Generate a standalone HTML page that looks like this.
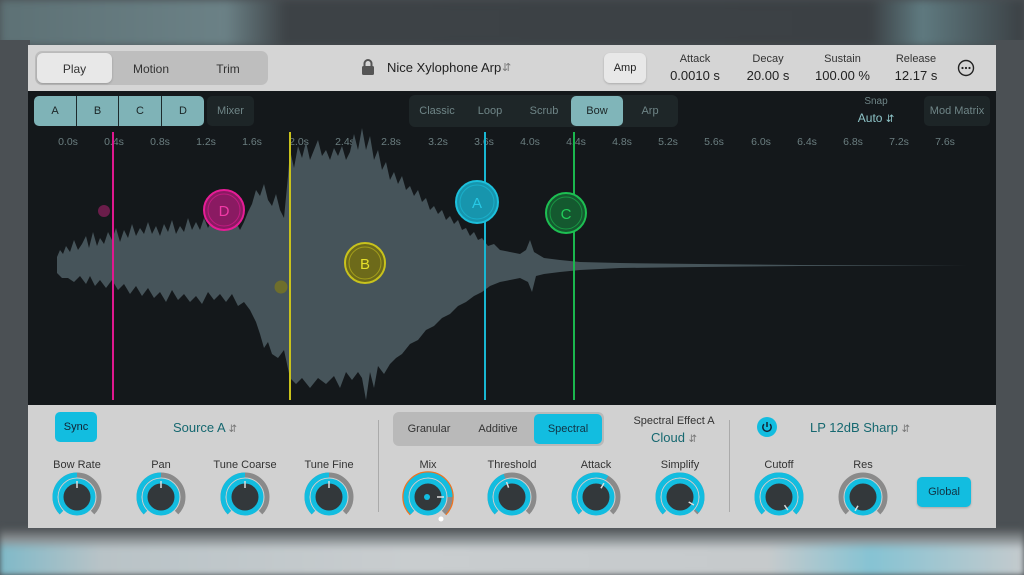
<!DOCTYPE html>
<html><head><meta charset="utf-8"><style>
*{margin:0;padding:0;box-sizing:border-box}
body{width:1024px;height:575px;overflow:hidden;position:relative;font-family:"Liberation Sans",sans-serif;background:#4a4f53}
.a{position:absolute}
.t{position:absolute;white-space:nowrap;text-align:center}
</style></head><body>
<div class="a" style="left:0;top:0;width:1024px;height:46px;background:linear-gradient(90deg,#5d7175 0,#6b8186 22%,#3d4246 28%,#3b4044 85%,#5f7a80 90%,#3b4044 100%);filter:blur(4px)"></div>
<div class="a" style="left:0;top:40px;width:30px;height:495px;background:#4b5054"></div>
<div class="a" style="left:994px;top:40px;width:30px;height:495px;background:#4b5054"></div>
<div class="a" style="left:0;top:528px;width:1024px;height:47px;background:linear-gradient(180deg,#4e5356 0,#8d9396 25%,rgba(0,0,0,0) 45%),linear-gradient(90deg,#7fb9c8 0,#b9c3c7 10%,#c9cdcf 40%,#c6cacc 75%,#86c3d3 85%,#c4cacd 100%);filter:blur(3px)"></div>

<div class="a" style="left:28px;top:45px;width:968px;height:46px;background:#d5d5d5"></div>
<div class="a" style="left:35px;top:51px;width:233px;height:34px;background:#bebebe;border-radius:7px"></div>
<div class="a" style="left:37px;top:53px;width:75px;height:30px;background:#e8e8e8;border-radius:6px;box-shadow:0 1px 2px rgba(0,0,0,.2)"></div>
<div class="t" style="left:37px;top:62px;width:75px;font-size:12px;color:#333">Play</div>
<div class="t" style="left:113px;top:62px;width:76px;font-size:12px;color:#333">Motion</div>
<div class="t" style="left:190px;top:62px;width:76px;font-size:12px;color:#333">Trim</div>
<svg class="a" style="left:361px;top:58px" width="14" height="18"><path d="M3.5 8V5.5a3.5 3.5 0 0 1 7 0V8" fill="none" stroke="#555" stroke-width="2"/><rect x="1" y="8" width="12" height="9" rx="1.5" fill="#555"/></svg>
<div class="t" style="left:387px;top:60px;font-size:13px;color:#222">Nice Xylophone Arp</div>
<div class="t" style="left:502px;top:61px;font-size:11px;color:#777">&#8693;</div>
<div class="a" style="left:604px;top:53px;width:42px;height:30px;background:#e8e8e8;border-radius:6px;box-shadow:0 1px 2px rgba(0,0,0,.2)"></div>
<div class="t" style="left:604px;top:62px;width:42px;font-size:11px;color:#222">Amp</div>
<div class="t" style="left:660px;top:53px;width:70px;font-size:11px;color:#333">Attack</div>
<div class="t" style="left:660px;top:68px;width:70px;font-size:13px;color:#222">0.0010 s</div>
<div class="t" style="left:733px;top:53px;width:70px;font-size:11px;color:#333">Decay</div>
<div class="t" style="left:733px;top:68px;width:70px;font-size:13px;color:#222">20.00 s</div>
<div class="t" style="left:805px;top:53px;width:75px;font-size:11px;color:#333">Sustain</div>
<div class="t" style="left:805px;top:68px;width:75px;font-size:13px;color:#222">100.00 %</div>
<div class="t" style="left:881px;top:53px;width:70px;font-size:11px;color:#333">Release</div>
<div class="t" style="left:881px;top:68px;width:70px;font-size:13px;color:#222">12.17 s</div>
<svg class="a" style="left:957px;top:59px" width="18" height="18"><circle cx="9" cy="9" r="7.5" fill="none" stroke="#222" stroke-width="1.4"/><circle cx="5.5" cy="9" r="1.1" fill="#222"/><circle cx="9" cy="9" r="1.1" fill="#222"/><circle cx="12.5" cy="9" r="1.1" fill="#222"/></svg>

<div class="a" style="left:28px;top:91px;width:968px;height:314px;background:#14181b"></div>
<div class="a" style="left:34px;top:96px;width:170px;height:30px;background:#7fb3b7;border-radius:5px"></div>
<div class="a" style="left:76px;top:96px;width:1px;height:30px;background:#1d2a2c"></div>
<div class="a" style="left:118px;top:96px;width:1px;height:30px;background:#1d2a2c"></div>
<div class="a" style="left:161px;top:96px;width:1px;height:30px;background:#1d2a2c"></div>
<div class="t" style="left:34px;top:105px;width:42px;font-size:11px;color:#1b2526">A</div>
<div class="t" style="left:77px;top:105px;width:41px;font-size:11px;color:#1b2526">B</div>
<div class="t" style="left:119px;top:105px;width:42px;font-size:11px;color:#1b2526">C</div>
<div class="t" style="left:162px;top:105px;width:42px;font-size:11px;color:#1b2526">D</div>
<div class="a" style="left:207px;top:96px;width:47px;height:30px;background:#1d2527;border-radius:5px"></div>
<div class="t" style="left:207px;top:105px;width:47px;font-size:11px;color:#6f8587">Mixer</div>
<div class="a" style="left:409px;top:95px;width:269px;height:32px;background:#1e2628;border-radius:6px"></div>
<div class="a" style="left:571px;top:96px;width:52px;height:30px;background:#80b5b9;border-radius:5px"></div>
<div class="t" style="left:413px;top:105px;width:48px;font-size:11px;color:#6f8587">Classic</div>
<div class="t" style="left:468px;top:105px;width:44px;font-size:11px;color:#6f8587">Loop</div>
<div class="t" style="left:520px;top:105px;width:48px;font-size:11px;color:#6f8587">Scrub</div>
<div class="t" style="left:571px;top:105px;width:52px;font-size:11px;color:#1b2526">Bow</div>
<div class="t" style="left:627px;top:105px;width:46px;font-size:11px;color:#6f8587">Arp</div>
<div class="t" style="left:850px;top:96px;width:52px;font-size:10px;color:#6f8587">Snap</div>
<div class="t" style="left:850px;top:111px;width:52px;font-size:12px;color:#8ec4c8">Auto <span style="font-size:10px">&#8693;</span></div>
<div class="a" style="left:924px;top:96px;width:66px;height:30px;background:#1d2527;border-radius:5px"></div>
<div class="t" style="left:924px;top:105px;width:66px;font-size:11px;color:#6f8587">Mod Matrix</div>

<svg class="a" style="left:28px;top:91px" width="968" height="314" viewBox="28 91 968 314">
<g font-family="Liberation Sans" font-size="10.5" fill="#6b7e80" text-anchor="middle">
<text x="68" y="145">0.0s</text><text x="114" y="145">0.4s</text><text x="160" y="145">0.8s</text><text x="206" y="145">1.2s</text><text x="252" y="145">1.6s</text><text x="299" y="145">2.0s</text><text x="345" y="145">2.4s</text><text x="391" y="145">2.8s</text><text x="438" y="145">3.2s</text><text x="484" y="145">3.6s</text><text x="530" y="145">4.0s</text><text x="576" y="145">4.4s</text><text x="622" y="145">4.8s</text><text x="668" y="145">5.2s</text><text x="714" y="145">5.6s</text><text x="761" y="145">6.0s</text><text x="807" y="145">6.4s</text><text x="853" y="145">6.8s</text><text x="899" y="145">7.2s</text><text x="945" y="145">7.6s</text>
</g>
<polygon fill="#46545a" points="57,257 60,250 63,254 66,246 70,252 74,240 78,250 82,244 86,236 89,248 93,232 97,246 100,238 104,244 108,232 112,240 116,228 120,242 124,230 128,238 132,224 136,236 140,228 144,234 148,222 152,234 156,226 160,236 164,224 168,232 172,220 176,234 180,226 184,232 188,218 192,230 196,222 200,230 204,218 208,228 212,220 216,230 220,214 224,226 228,218 232,226 236,222 240,230 244,222 248,212 252,204 256,190 260,196 264,184 268,200 272,206 276,194 280,210 284,218 288,176 290,150 294,168 298,146 302,158 306,142 310,160 314,150 318,140 322,156 326,150 330,160 334,148 338,156 342,146 346,160 350,152 354,134 358,150 362,128 366,150 370,136 374,160 378,150 382,170 386,162 390,180 394,172 398,184 402,176 406,190 410,186 414,196 418,190 422,202 426,198 430,210 434,206 438,214 442,210 446,220 450,216 454,224 458,220 462,230 466,228 470,236 474,232 478,240 482,238 488,246 494,244 500,250 510,252 520,254 526,250 530,240 534,252 544,258 560,260 580,262 620,263 700,264 800,265 968,265 800,266 700,267 620,268 580,270 560,272 544,274 536,276 532,292 528,282 520,278 510,280 500,282 490,286 482,292 474,296 466,302 458,306 450,314 442,318 434,326 426,330 418,340 410,344 402,354 396,358 390,364 384,374 378,366 374,388 370,372 366,400 362,378 358,372 352,380 346,372 340,388 334,376 326,384 318,378 310,388 302,378 296,384 290,378 284,350 278,358 272,354 268,342 264,348 260,334 256,322 250,310 244,302 238,306 232,294 226,302 220,294 214,300 208,292 202,304 196,296 190,302 184,294 178,300 172,290 166,302 160,292 154,298 148,288 142,296 136,286 130,294 124,284 118,290 112,280 106,288 100,280 95,286 90,276 86,284 80,276 74,282 68,278 62,278 57,273"/>
<circle cx="104" cy="211" r="6" fill="#6a1d4a"/>
<circle cx="281" cy="287" r="6.5" fill="#6e6e2c"/>
<line x1="113" y1="132" x2="113" y2="400" stroke="#e0188f" stroke-width="2"/>
<line x1="290" y1="132" x2="290" y2="400" stroke="#c9c21c" stroke-width="2"/>
<line x1="485" y1="132" x2="485" y2="400" stroke="#18b6d2" stroke-width="2"/>
<line x1="574" y1="132" x2="574" y2="400" stroke="#1bb64e" stroke-width="2"/>
<g font-family="Liberation Sans" font-size="15" text-anchor="middle">
<circle cx="224" cy="210" r="20" fill="#8a1a62" stroke="#e61c96" stroke-width="2"/><circle cx="224" cy="210" r="16" fill="none" stroke="#e61c96" stroke-width="1" opacity=".6"/><text x="224" y="216" fill="#f23aa7">D</text>
<circle cx="365" cy="263" r="20" fill="#6d6a1a" stroke="#c8c21c" stroke-width="2"/><circle cx="365" cy="263" r="16" fill="none" stroke="#c8c21c" stroke-width="1" opacity=".6"/><text x="365" y="269" fill="#e6df2a">B</text>
<circle cx="477" cy="202" r="21" fill="#1795ad" stroke="#1cc0dc" stroke-width="2"/><circle cx="477" cy="202" r="17" fill="none" stroke="#1cc0dc" stroke-width="1" opacity=".6"/><text x="477" y="208" fill="#27c9e6">A</text>
<circle cx="566" cy="213" r="20" fill="#14592f" stroke="#1dbf52" stroke-width="2"/><circle cx="566" cy="213" r="16" fill="none" stroke="#1dbf52" stroke-width="1" opacity=".6"/><text x="566" y="219" fill="#22cc5a">C</text>
</g>
</svg>

<div class="a" style="left:28px;top:405px;width:968px;height:123px;background:#d1d1d1"></div>
<div class="a" style="left:55px;top:412px;width:42px;height:30px;background:#12bde0;border-radius:5px"></div>
<div class="t" style="left:55px;top:421px;width:42px;font-size:11px;color:#123">Sync</div>
<div class="t" style="left:150px;top:420px;width:110px;font-size:13px;color:#166870">Source A <span style="font-size:10px;color:#777">&#8693;</span></div>
<div class="a" style="left:378px;top:420px;width:1px;height:92px;background:#aaa"></div>
<div class="a" style="left:393px;top:412px;width:211px;height:34px;background:#b9b9b9;border-radius:6px"></div>
<div class="a" style="left:534px;top:414px;width:68px;height:30px;background:#12bde0;border-radius:5px"></div>
<div class="t" style="left:396px;top:423px;width:66px;font-size:11px;color:#333">Granular</div>
<div class="t" style="left:466px;top:423px;width:64px;font-size:11px;color:#333">Additive</div>
<div class="t" style="left:534px;top:423px;width:68px;font-size:11px;color:#134">Spectral</div>
<div class="t" style="left:622px;top:415px;width:104px;font-size:11px;color:#333">Spectral Effect A</div>
<div class="t" style="left:630px;top:430px;width:88px;font-size:13px;color:#166870">Cloud <span style="font-size:10px;color:#777">&#8693;</span></div>
<div class="a" style="left:729px;top:420px;width:1px;height:92px;background:#aaa"></div>
<svg class="a" style="left:757px;top:417px" width="20" height="20"><circle cx="10" cy="10" r="10" fill="#12bde0"/><path d="M7 7.2a4.2 4.2 0 1 0 6 0" fill="none" stroke="#123" stroke-width="1.5"/><line x1="10" y1="5" x2="10" y2="10" stroke="#123" stroke-width="1.5"/></svg>
<div class="t" style="left:800px;top:420px;width:120px;font-size:13px;color:#166870">LP 12dB Sharp <span style="font-size:10px;color:#777">&#8693;</span></div>
<div class="a" style="left:917px;top:477px;width:54px;height:30px;background:#12bde0;border-radius:5px;box-shadow:0 1px 2px rgba(0,0,0,.2)"></div>
<div class="t" style="left:917px;top:486px;width:54px;font-size:11px;color:#134">Global</div>
<div class="t" style="left:37px;top:459px;width:80px;font-size:11px;color:#333">Bow Rate</div>
<div class="t" style="left:121px;top:459px;width:80px;font-size:11px;color:#333">Pan</div>
<div class="t" style="left:205px;top:459px;width:80px;font-size:11px;color:#333">Tune Coarse</div>
<div class="t" style="left:289px;top:459px;width:80px;font-size:11px;color:#333">Tune Fine</div>
<div class="t" style="left:388px;top:459px;width:80px;font-size:11px;color:#333">Mix</div>
<div class="t" style="left:472px;top:459px;width:80px;font-size:11px;color:#333">Threshold</div>
<div class="t" style="left:556px;top:459px;width:80px;font-size:11px;color:#333">Attack</div>
<div class="t" style="left:640px;top:459px;width:80px;font-size:11px;color:#333">Simplify</div>
<div class="t" style="left:739px;top:459px;width:80px;font-size:11px;color:#333">Cutoff</div>
<div class="t" style="left:823px;top:459px;width:80px;font-size:11px;color:#333">Res</div>

<svg class="a" style="left:0;top:0" width="1024" height="575">
<defs>
<g id="k"><path d="M-15.56 15.56A22 22 0 1 1 15.56 15.56" fill="none" stroke="#8a8a8a" stroke-width="5"/><circle r="17.5" fill="#2e3336" stroke="#1c1f21" stroke-width="1"/><circle r="16" fill="#33383b"/></g>
</defs>
<g fill="none" stroke="#12bde0" stroke-width="5" stroke-linecap="butt">
<g transform="translate(77,497)"><use href="#k"/><path d="M-15.56 15.56A22 22 0 0 1 0 -22"/><line x1="0" y1="-9" x2="0" y2="-16" stroke="#ddd" stroke-width="1.5"/></g>
<g transform="translate(161,497)"><use href="#k"/><path d="M-15.56 15.56A22 22 0 0 1 0 -22"/><line x1="0" y1="-9" x2="0" y2="-16" stroke="#ddd" stroke-width="1.5"/></g>
<g transform="translate(245,497)"><use href="#k"/><path d="M-15.56 15.56A22 22 0 0 1 0 -22"/><line x1="0" y1="-9" x2="0" y2="-16" stroke="#ddd" stroke-width="1.5"/></g>
<g transform="translate(329,497)"><use href="#k"/><path d="M-15.56 15.56A22 22 0 0 1 0 -22"/><line x1="0" y1="-9" x2="0" y2="-16" stroke="#ddd" stroke-width="1.5"/></g>
<g transform="translate(428,497)"><path d="M-17.7 17.7A25 25 0 1 1 17.7 17.7" stroke="#f0731e" stroke-width="1.5"/><use href="#k"/><path d="M-15.56 15.56A22 22 0 1 1 22 0"/><line x1="9" y1="0" x2="16" y2="0" stroke="#ddd" stroke-width="1.5"/><circle cx="-1" cy="0" r="3" fill="#12bde0" stroke="none"/><circle cx="13" cy="22" r="2.5" fill="#fff" stroke="none"/></g>
<g transform="translate(512,497)"><use href="#k"/><path d="M-15.56 15.56A22 22 0 0 1 -7.52 -20.67"/><line x1="-3.4" y1="-9.4" x2="-5.5" y2="-15" stroke="#ddd" stroke-width="1.5"/></g>
<g transform="translate(596,497)"><use href="#k"/><path d="M-15.56 15.56A22 22 0 0 1 11 -19.05"/><line x1="5" y1="-8.7" x2="8" y2="-13.9" stroke="#ddd" stroke-width="1.5"/></g>
<g transform="translate(680,497)"><use href="#k"/><path d="M-15.56 15.56A22 22 0 1 1 16.85 14.14"/><line x1="8.7" y1="5" x2="13.9" y2="8" stroke="#ddd" stroke-width="1.5"/></g>
<g transform="translate(779,497)"><use href="#k"/><path d="M-15.56 15.56A22 22 0 1 1 15.56 15.56"/><line x1="5.5" y1="8.2" x2="8.9" y2="13.1" stroke="#ddd" stroke-width="1.5"/></g>
<g transform="translate(863,497)"><use href="#k"/><line x1="-5" y1="8.7" x2="-8" y2="13.9" stroke="#ddd" stroke-width="1.5"/></g>
</g>
</svg>
</body></html>
